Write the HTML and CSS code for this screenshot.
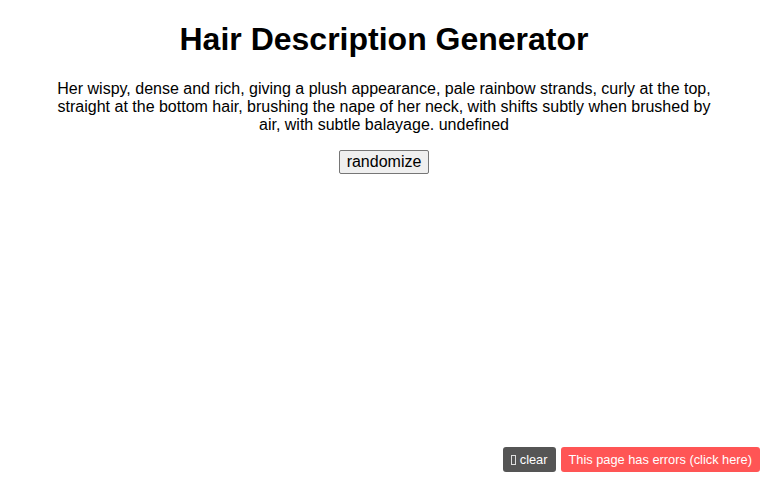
FILE: index.html
```html
<!DOCTYPE html>
<html>
<head>
<meta charset="utf-8">
<link rel="stylesheet" href="styles.css">
</head>
<body>
<main class="page">
  <h1 class="title">Hair Description Generator</h1>
  <p class="desc">Her wispy, dense and rich, giving a plush appearance, pale rainbow strands, curly at the top, straight at the bottom hair, brushing the nape of her neck, with shifts subtly when brushed by air, with subtle balayage. undefined</p>
  <div class="actions"><button class="randomize">randomize</button></div>
</main>
<div class="errbar">
  <button class="clear"><span class="icon"></span> clear</button>
  <button class="errors">This page has errors (click here)</button>
</div>
</body>
</html>
```
FILE: styles.css
```css
html, body {
  margin: 0;
  padding: 0;
  background: #fff;
}
body {
  font-family: "Liberation Sans", Arial, sans-serif;
  color: #000;
}
.page {
  max-width: 660px;
  margin: 0 auto;
  padding: 21px 8px 0;
  text-align: center;
}
.title {
  font-size: 32px;
  font-weight: bold;
  margin: 0 0 22px;
  line-height: 37px;
}
.desc {
  font-size: 16px;
  line-height: 18px;
  margin: 0 0 16px;
}
.actions {
  display: flex;
  justify-content: center;
}
.randomize {
  font-family: "Liberation Sans", Arial, sans-serif;
  font-size: 16px;
  height: 24px;
  padding: 1px 7px;
  border: 1px solid #767676;
  border-radius: 2px;
  background: #efefef;
  color: #000;
}
.errbar {
  position: fixed;
  right: 8px;
  bottom: 8px;
  display: flex;
  gap: 5px;
}
.errbar button {
  font-family: "Liberation Sans", Arial, sans-serif;
  font-size: 12.8px;
  height: 25px;
  border: none;
  border-radius: 3px;
  color: #fff;
  padding: 0 8px;
}
.clear {
  background: #555;
}
.errors {
  background: #f55;
}
.icon {
  display: inline-block;
  width: 3px;
  height: 8px;
  border: 1px solid #ddd;
  vertical-align: -1px;
}
```
